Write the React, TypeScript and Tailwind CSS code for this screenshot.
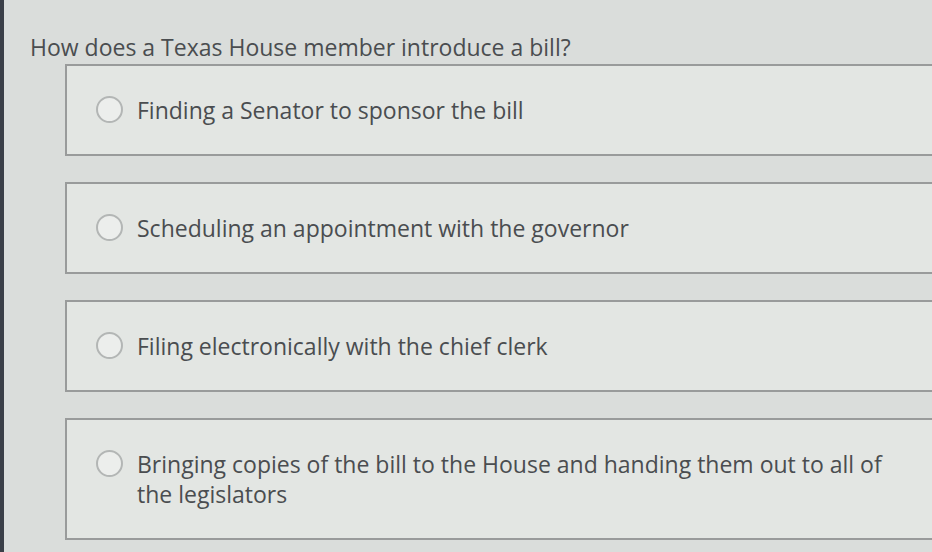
import React from 'react'

const choices = [
  'Finding a Senator to sponsor the bill',
  'Scheduling an appointment with the governor',
  'Filing electronically with the chief clerk',
  'Bringing copies of the bill to the House and handing them out to all of the legislators',
]

function Radio() {
  return (
    <span className="mt-[1px] size-[27px] shrink-0 rounded-full border-2 border-[#b3b6b5] bg-[#eceeec]" />
  )
}

export default function App() {
  const [picked, setPicked] = React.useState<number | null>(null)

  return (
    <div
      className="min-h-[552px] w-[932px] overflow-hidden border-l-4 border-[#3a3f48] bg-[#dadddb] text-[#4a4d50]"
      style={{ fontFamily: '"Open Sans", "Liberation Sans", sans-serif' }}
    >
      <h2 className="pl-[26px] pt-[32px] text-[23px] leading-[30px]">
        How does a Texas House member introduce a bill?
      </h2>

      <div className="ml-[61px] mt-[2px] flex flex-col gap-[26px]">
        {choices.map((text, i) => (
          <label
            key={i}
            onClick={() => setPicked(i)}
            className="flex cursor-pointer items-start gap-[14px] border-y-2 border-l-2 border-[#999b9b] bg-[#e3e6e3] py-[29px] pl-[29px] pr-[30px]"
          >
            <Radio />
            <span className="text-[23px] leading-[30px]">
              {picked === i ? <b className="font-normal">{text}</b> : text}
            </span>
          </label>
        ))}
      </div>
    </div>
  )
}
